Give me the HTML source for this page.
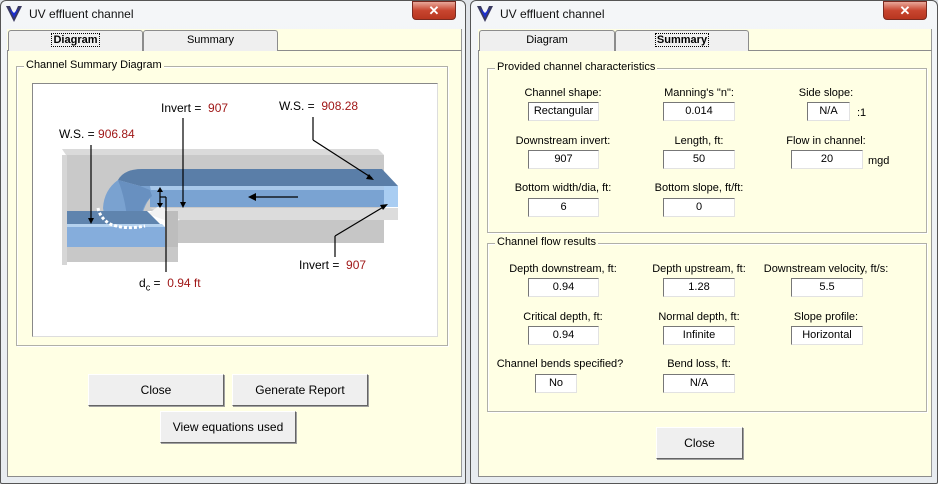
<!DOCTYPE html>
<html><head><meta charset="utf-8">
<style>
*{box-sizing:border-box;margin:0;padding:0}
body{width:938px;height:484px;background:#dfe3e8;position:relative;overflow:hidden;font-family:"Liberation Sans",sans-serif;font-size:11px;color:#000}
.a{position:absolute}
.win{position:absolute;top:0;height:484px;border:1px solid #555;border-radius:6px 6px 2px 2px;background:linear-gradient(#f4f6f8,#e8ecf0)}
.cont{position:absolute;background:#ffffe4;border:1px solid #8a8f96}
.title{position:absolute;top:7px;font-size:12px;color:#111}
.xbtn{position:absolute;top:1px;width:44px;height:19px;border:1px solid #7a2a20;border-radius:0 0 4px 4px;background:linear-gradient(#e9a89a,#c8452f 50%,#b83620);color:#fff;font-weight:bold;font-size:13px;text-align:center;line-height:17px}
.tab{position:absolute;height:21px;border:1px solid #8c8c8c;border-bottom:none;border-radius:3px 3px 0 0;background:#efefef;text-align:center;line-height:19px;font-size:11px}
.tab.sel{background:#f3f3f3}
.tab.sel span{font-weight:bold;border:1px dotted #000;padding:0 1px}
.grp{position:absolute;border:1px solid #b0b0a8;box-shadow:inset 1px 1px 0 #fff,1px 1px 0 #fff}
.grp b{position:absolute;top:-8px;left:7px;background:#ffffe4;font-weight:normal;padding:0 2px;white-space:nowrap}
.btn{position:absolute;background:#efefef;border:1px solid;border-color:#fff #646464 #646464 #fff;box-shadow:1px 1px 0 #a0a0a0;text-align:center;font-size:12px}
.lbl{position:absolute;width:170px;text-align:center;white-space:nowrap}
.fld{position:absolute;height:19px;background:#fff;border:1px solid;border-color:#777 #e2e2e2 #e2e2e2 #777;text-align:center;line-height:17px}
.r{color:#a01818}
</style></head><body>

<!-- LEFT WINDOW -->
<div class="win" style="left:0;width:466px"></div>
<svg class="a" style="left:5px;top:5px" width="18" height="18" viewBox="0 0 18 18"><path d="M1 1 L9 17 L17 1 L13 1 L9 10 L5 1Z" fill="#3a3a60"/><path d="M4 3 L9 13 L14 3 L9 8Z" fill="#1c2fd0"/></svg>
<div class="title" style="left:29px">UV effluent channel</div>
<div class="xbtn" style="left:412px">✕</div>
<div class="cont" style="left:7px;top:29px;width:455px;height:448px;border:none;border-right:1px solid #999;border-bottom:1px solid #999"></div>
<div class="a" style="left:7px;top:50px;width:455px;height:1px;background:#8c8c8c"></div>
<div class="a" style="left:7px;top:50px;width:1px;height:427px;background:#8c8c8c"></div>
<div class="a" style="left:7px;top:476px;width:455px;height:1px;background:#8c8c8c"></div>
<div class="tab sel" style="left:8px;top:30px;width:135px;height:21px;background:#f0f0f0"><span>Diagram</span></div>
<div class="tab" style="left:143px;top:30px;width:135px">Summary</div>

<div class="grp" style="left:16px;top:66px;width:432px;height:280px"><b>Channel Summary Diagram</b></div>
<div class="a" style="left:32px;top:83px;width:406px;height:254px;background:#fff;border:1px solid #888;border-right-color:#ddd;border-bottom-color:#ddd"></div>

<svg class="a" style="left:0;top:0" width="470" height="340">
 <polygon points="62,149 378,149 384,155 66,155" fill="#dadada"/>
 <rect x="62" y="155" width="322" height="56" fill="#c9c9c9"/>
 <rect x="178" y="208" width="206" height="35" fill="#c6c6c6"/>
 <rect x="62" y="155" width="5" height="110" fill="#d6d6d6"/>
 <polygon points="150,208 398,208 398,220 178,220" fill="#dcdcdc"/>
 <polygon points="148,214 160,205 180,220 170,222" fill="#f2f2f2"/>
 <!-- channel -->
 <path d="M118,180 Q124,169 142,169 L382,169 L398,186 L140,186 Z" fill="#5a7ea8"/>
 <rect x="140" y="186" width="258" height="4" fill="#a8c8ea"/>
 <rect x="150" y="190" width="248" height="17" fill="#7aa3d2"/>
 <polygon points="384,186 398,186 398,207 384,207" fill="#a9cdf2"/>
 <!-- elbow -->
 <path d="M118,180 Q104,190 103,208 L106,226 L140,228 Q142,206 152,196 L150,186 L140,186 Z" fill="#7aa2d0"/>
 <path d="M118,180 L140,186 L150,190 L152,196 Q140,206 140,228 L128,227 Q126,200 118,180Z" fill="#6890c0"/>
 <!-- lower tank -->
 <polygon points="67,211 147,211 160,224 67,224" fill="#5f84ae"/>
 <polygon points="67,224 162,224 165,227 67,227" fill="#b5d2ef"/>
 <polygon points="67,227 165,227 165,247 67,247" fill="#85addc"/>
 <path d="M98,208 Q100,218 110,224 Q125,230 145,226" stroke="#fff" stroke-width="3" fill="none" stroke-dasharray="3,2"/>
 <rect x="67" y="247" width="111" height="15" fill="#c8c8c8"/>
 <rect x="165" y="211" width="13" height="36" fill="#bdbdbd"/>
 <g stroke="#000" stroke-width="1.2" fill="#000">
  <line x1="91" y1="145" x2="91" y2="220"/><polygon points="88,218 94,218 91,224" stroke="none"/>
  <line x1="183" y1="118" x2="183" y2="204"/><polygon points="180,202 186,202 183,208" stroke="none"/>
  <line x1="313" y1="117" x2="313" y2="140"/><line x1="313" y1="140" x2="372" y2="178"/><polygon points="374,180 366,179 369,174" stroke="none"/>
  <line x1="335" y1="257" x2="335" y2="236"/><line x1="335" y1="236" x2="385" y2="206"/><polygon points="388,204 380,205 383,210" stroke="none"/>
  <line x1="298" y1="197" x2="254" y2="197"/><polygon points="248,197 256,193 256,201" stroke="none"/>
  <line x1="160" y1="190" x2="160" y2="205"/><polygon points="160,187 157,192 163,192" stroke="none"/><polygon points="160,208 157,203 163,203" stroke="none"/>
  <line x1="160" y1="197" x2="166" y2="197"/><line x1="166" y1="197" x2="166" y2="272"/>
 </g>
</svg>
<div class="a" style="left:59px;top:127px;font-size:12px">W.S. = <span class="r">906.84</span></div>
<div class="a" style="left:161px;top:101px;font-size:12px">Invert = &nbsp;<span class="r">907</span></div>
<div class="a" style="left:279px;top:99px;font-size:12px">W.S. = &nbsp;<span class="r">908.28</span></div>
<div class="a" style="left:299px;top:258px;font-size:12px">Invert = &nbsp;<span class="r">907</span></div>
<div class="a" style="left:139px;top:276px;font-size:12px">d<sub style="font-size:9px">c</sub> = &nbsp;<span class="r">0.94 ft</span></div>

<div class="btn" style="left:88px;top:374px;width:136px;height:32px;line-height:30px">Close</div>
<div class="btn" style="left:232px;top:374px;width:136px;height:32px;line-height:30px">Generate Report</div>
<div class="btn" style="left:160px;top:411px;width:136px;height:32px;line-height:30px">View equations used</div>

<!-- RIGHT WINDOW -->
<div class="win" style="left:470px;width:468px"></div>
<svg class="a" style="left:476px;top:5px" width="18" height="18" viewBox="0 0 18 18"><path d="M1 1 L9 17 L17 1 L13 1 L9 10 L5 1Z" fill="#3a3a60"/><path d="M4 3 L9 13 L14 3 L9 8Z" fill="#1c2fd0"/></svg>
<div class="title" style="left:500px">UV effluent channel</div>
<div class="xbtn" style="left:883px">✕</div>
<div class="cont" style="left:478px;top:29px;width:454px;height:448px;border:none;border-right:1px solid #999;border-bottom:1px solid #999"></div>
<div class="a" style="left:478px;top:50px;width:454px;height:1px;background:#8c8c8c"></div>
<div class="a" style="left:478px;top:50px;width:1px;height:427px;background:#8c8c8c"></div>
<div class="a" style="left:478px;top:476px;width:454px;height:1px;background:#8c8c8c"></div>
<div class="tab" style="left:479px;top:30px;width:136px">Diagram</div>
<div class="tab sel" style="left:615px;top:30px;width:134px;height:21px;background:#f0f0f0"><span>Summary</span></div>

<div class="grp" style="left:487px;top:68px;width:440px;height:165px"><b>Provided channel characteristics</b></div>
<div class="lbl" style="left:478px;top:87px">Channel shape:</div>
<div class="fld" style="left:528px;top:102px;width:71px">Rectangular</div>
<div class="lbl" style="left:614px;top:87px">Manning's "n":</div>
<div class="fld" style="left:663px;top:102px;width:72px">0.014</div>
<div class="lbl" style="left:741px;top:87px">Side slope:</div>
<div class="fld" style="left:807px;top:102px;width:43px">N/A</div>
<div class="a" style="left:857px;top:107px">:1</div>

<div class="lbl" style="left:478px;top:135px">Downstream invert:</div>
<div class="fld" style="left:528px;top:150px;width:71px">907</div>
<div class="lbl" style="left:614px;top:135px">Length, ft:</div>
<div class="fld" style="left:663px;top:150px;width:72px">50</div>
<div class="lbl" style="left:741px;top:135px">Flow in channel:</div>
<div class="fld" style="left:791px;top:150px;width:72px">20</div>
<div class="a" style="left:868px;top:155px">mgd</div>

<div class="lbl" style="left:478px;top:182px">Bottom width/dia, ft:</div>
<div class="fld" style="left:528px;top:198px;width:71px">6</div>
<div class="lbl" style="left:614px;top:182px">Bottom slope, ft/ft:</div>
<div class="fld" style="left:663px;top:198px;width:72px">0</div>

<div class="grp" style="left:487px;top:243px;width:440px;height:169px"><b>Channel flow results</b></div>
<div class="lbl" style="left:478px;top:263px">Depth downstream, ft:</div>
<div class="fld" style="left:528px;top:278px;width:71px">0.94</div>
<div class="lbl" style="left:614px;top:263px">Depth upstream, ft:</div>
<div class="fld" style="left:663px;top:278px;width:72px">1.28</div>
<div class="lbl" style="left:741px;top:263px">Downstream velocity, ft/s:</div>
<div class="fld" style="left:791px;top:278px;width:72px">5.5</div>

<div class="lbl" style="left:478px;top:311px">Critical depth, ft:</div>
<div class="fld" style="left:528px;top:326px;width:71px">0.94</div>
<div class="lbl" style="left:614px;top:311px">Normal depth, ft:</div>
<div class="fld" style="left:663px;top:326px;width:72px">Infinite</div>
<div class="lbl" style="left:741px;top:311px">Slope profile:</div>
<div class="fld" style="left:791px;top:326px;width:72px">Horizontal</div>

<div class="lbl" style="left:475px;top:358px">Channel bends specified?</div>
<div class="fld" style="left:535px;top:374px;width:42px">No</div>
<div class="lbl" style="left:614px;top:358px">Bend loss, ft:</div>
<div class="fld" style="left:663px;top:374px;width:72px">N/A</div>

<div class="btn" style="left:656px;top:427px;width:87px;height:32px;line-height:30px">Close</div>
</body></html>
